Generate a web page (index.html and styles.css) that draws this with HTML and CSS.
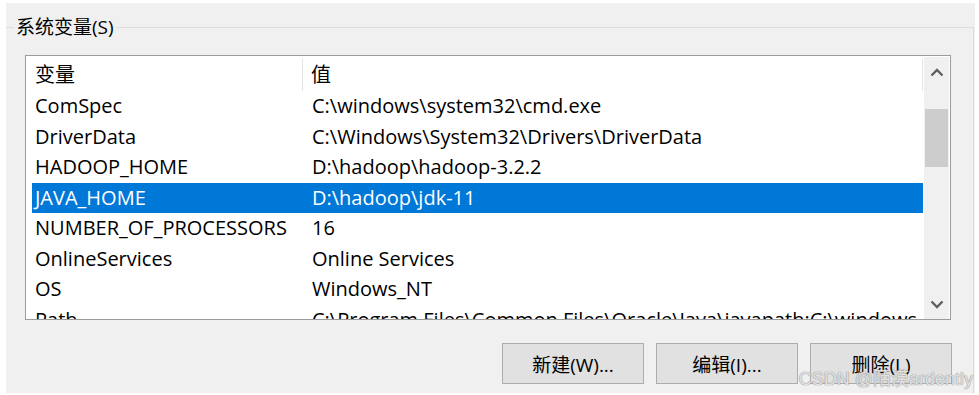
FILE: index.html
```html
<!DOCTYPE html>
<html lang="zh-CN">
<head>
    <meta charset="UTF-8">
    <title>系统变量</title>
    <link rel="stylesheet" href="styles.css">
</head>
<body>
    <div class="window">
        <fieldset class="group">
            <legend>系统变量(S)</legend>

            <div class="listbox">
                <div class="list">
                    <div class="list-head">
                        <div class="head-name">变量</div>
                        <div class="head-value">值</div>
                    </div>
                    <div class="list-body">
                        <div class="row"><span class="col-name">ComSpec</span><span class="col-value">C:\windows\system32\cmd.exe</span></div>
                        <div class="row"><span class="col-name">DriverData</span><span class="col-value">C:\Windows\System32\Drivers\DriverData</span></div>
                        <div class="row"><span class="col-name">HADOOP_HOME</span><span class="col-value">D:\hadoop\hadoop-3.2.2</span></div>
                        <div class="row selected"><span class="col-name">JAVA_HOME</span><span class="col-value">D:\hadoop\jdk-11</span></div>
                        <div class="row"><span class="col-name">NUMBER_OF_PROCESSORS</span><span class="col-value">16</span></div>
                        <div class="row"><span class="col-name">OnlineServices</span><span class="col-value">Online Services</span></div>
                        <div class="row"><span class="col-name">OS</span><span class="col-value">Windows_NT</span></div>
                        <div class="row"><span class="col-name">Path</span><span class="col-value">C:\Program Files\Common Files\Oracle\Java\javapath;C:\windows</span></div>
                    </div>
                </div>

                <div class="scrollbar">
                    <div class="arrow">
                        <svg width="14" height="9" viewBox="0 0 14 9"><path d="M1.5 7.5 L7 2 L12.5 7.5" fill="none" stroke="#606060" stroke-width="2.4"/></svg>
                    </div>
                    <div class="track"><div class="thumb"></div></div>
                    <div class="arrow">
                        <svg width="14" height="9" viewBox="0 0 14 9"><path d="M1.5 1.5 L7 7 L12.5 1.5" fill="none" stroke="#606060" stroke-width="2.4"/></svg>
                    </div>
                </div>
            </div>

            <div class="buttons">
                <button class="btn">新建(W)...</button>
                <button class="btn">编辑(I)...</button>
                <button class="btn">删除(L)</button>
            </div>
        </fieldset>

        <div class="watermark">CSDN @陌漠ardently</div>
    </div>
</body>
</html>
```

FILE: styles.css
```css
body {
    margin: 0;
    background: #ffffff;
    font-family: 'Open Sans', 'Noto Sans CJK SC', sans-serif;
    font-size: 20px;
    color: #000000;
}

.window {
    position: relative;
    margin: 3px 4px 0 6px;
    height: 390px;
    background: #f0f0f0;
    overflow: hidden;
}

/* Рамка группы */
.group {
    margin: 12px 2px 0 0;
    padding: 16px 21px 0 19px;
    height: 400px;
    border: 1px solid #dcdcdc;
    border-left: none;
    border-bottom: none;
}

.group legend {
    margin-left: -11px;
    padding: 0 2px;
    line-height: 24px;
    font-size: 19px;
}

.listbox {
    display: flex;
    width: 924px;
    height: 263px;
    border: 1px solid #9c9c9c;
    background: #ffffff;
}

.list {
    width: 898px;
    overflow: hidden;
}

.list-head {
    display: flex;
    height: 35px;
}

.head-name {
    width: 267px;
    padding: 1px 0 0 9px;
    line-height: 32px;
    margin-top: 2px;
}

.head-value {
    flex: 1;
    margin: 2px 1px 0 0;
    padding: 1px 0 0 8px;
    line-height: 32px;
    border-left: 1px solid #e5e5e5;
    border-right: 1px solid #e5e5e5;
}

.row {
    display: flex;
    height: 30.5px;
    line-height: 30.5px;
    margin: 0 1px 0 6px;
    white-space: nowrap;
}

.row.selected {
    background: #0078d7;
    color: #ffffff;
}

.col-name {
    width: 277px;
    padding-left: 3px;
    flex-shrink: 0;
}

.scrollbar {
    width: 25px;
    display: flex;
    flex-direction: column;
    background: #f0f0f0;
    margin-top: 1px;
}

.arrow {
    height: 30px;
    display: flex;
    align-items: center;
    justify-content: center;
}

.track {
    flex: 1;
    padding-top: 22px;
}

.thumb {
    height: 58px;
    margin: 0 1px;
    background: #cdcdcd;
}

.buttons {
    display: flex;
    justify-content: flex-end;
    gap: 12px;
    width: 927px;
    margin-top: 23px;
}

.btn {
    width: 142px;
    height: 41px;
    background: #e1e1e1;
    border: 1px solid #adadad;
    font-family: inherit;
    font-size: 19px;
    color: #000000;
    padding: 0;
}

.watermark {
    position: absolute;
    right: 2px;
    bottom: 3px;
    font-family: 'Liberation Sans', 'Noto Sans CJK SC', sans-serif;
    font-size: 18px;
    color: rgba(255, 255, 255, 0.75);
    text-shadow: 0 0 1px #8a8a8a, 0 0 1px #8a8a8a;
}
```
